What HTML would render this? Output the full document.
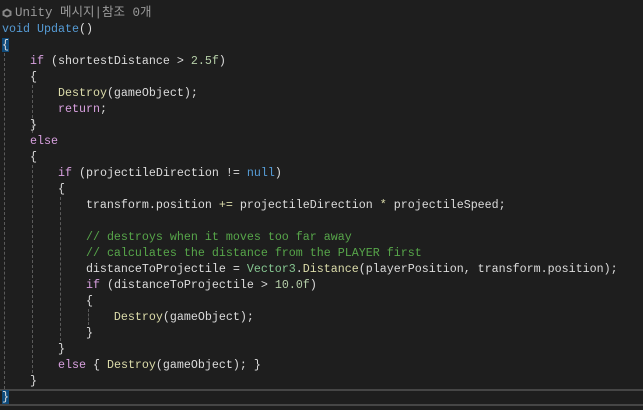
<!DOCTYPE html>
<html><head><meta charset="utf-8"><style>
html,body{margin:0;padding:0;background:#1e1e1e;width:643px;height:410px;overflow:hidden}
.code{position:absolute;left:2px;top:5px;font-family:"Liberation Mono","Noto Sans CJK KR",monospace;font-size:11.67px;line-height:16px;color:#dcdcdc;white-space:pre;margin:0}
.k{color:#d8a0df}.b{color:#569cd6}.m{color:#dcdcaa}.n{color:#b5cea8}.c{color:#57a64a}.t{color:#86c691}.o{color:#b4b4b4}
.hl{background:#0e4a7a}
.g{position:absolute;width:0;border-left:1px dashed #5a5a5a}
.cur{position:absolute;left:0;top:389px;width:643px;height:13px;border-top:2px solid #464646;border-bottom:2px solid #464646}
.hdr{color:#999;font-family:"Liberation Mono","Noto Sans CJK KR",monospace;font-size:12.5px;padding-left:13px}
</style></head><body>
<div class="cur"></div>
<div class="g" style="left:4px;top:53px;height:336px"></div>
<div class="g" style="left:32px;top:85px;height:48px"></div>
<div class="g" style="left:32px;top:165px;height:208px"></div>
<div class="g" style="left:60px;top:197px;height:144px"></div>
<div class="g" style="left:88px;top:309px;height:16px"></div>
<svg style="position:absolute;left:2px;top:8px" width="10" height="10" viewBox="0 0 10 10"><polygon points="5,0.5 9.5,3 9.5,7.5 5,9.5 0.5,7.5 0.5,3" fill="#888"/><polygon points="5,2.5 7.5,4 7.5,6.5 5,7.5 2.5,6.5 2.5,4" fill="#1e1e1e"/></svg>
<pre class="code"><span class="hdr">Unity 메시지|참조 0개</span>
<span class="b">void</span> <span class="b">Update</span>()
<span class="hl">{</span>
    <span class="k">if</span> (shortestDistance &gt; <span class="n">2.5f</span>)
    {
        <span class="m">Destroy</span>(gameObject);
        <span class="k">return</span>;
    }
    <span class="k">else</span>
    {
        <span class="k">if</span> (projectileDirection != <span class="b">null</span>)
        {
            transform.position <span class="m">+=</span> projectileDirection <span class="m">*</span> projectileSpeed;

            <span class="c">// destroys when it moves too far away</span>
            <span class="c">// calculates the distance from the PLAYER first</span>
            distanceToProjectile = <span class="t">Vector3</span>.<span class="m">Distance</span>(playerPosition, transform.position);
            <span class="k">if</span> (distanceToProjectile &gt; <span class="n">10.0f</span>)
            {
                <span class="m">Destroy</span>(gameObject);
            }
        }
        <span class="k">else</span> { <span class="m">Destroy</span>(gameObject); }
    }
<span class="hl">}</span></pre>
</body></html>
